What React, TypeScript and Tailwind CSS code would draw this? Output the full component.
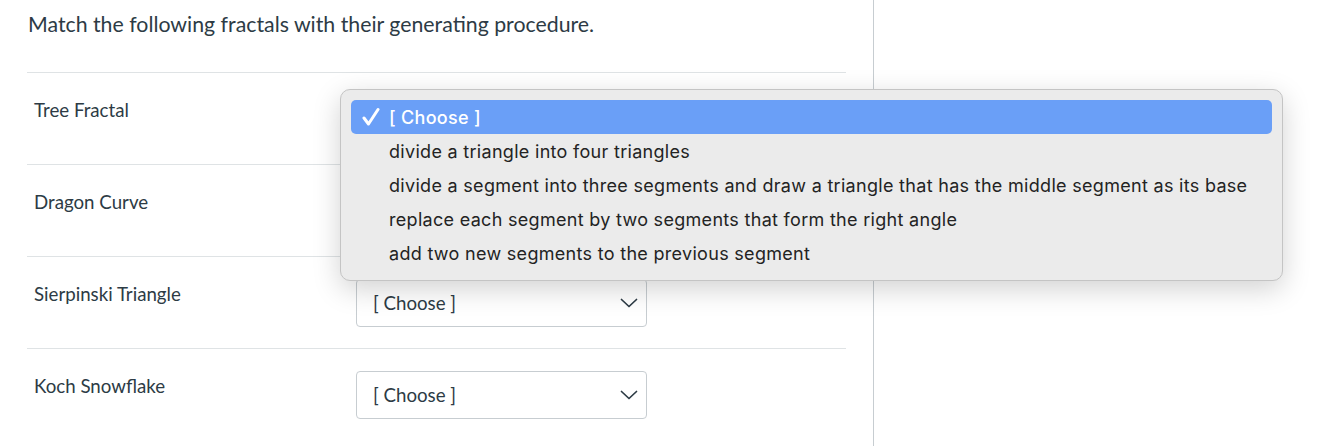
import React from "react";

const rows = ["Tree Fractal", "Dragon Curve", "Sierpinski Triangle", "Koch Snowflake"];
const options = [
  "[ Choose ]",
  "divide a triangle into four triangles",
  "divide a segment into three segments and draw a triangle that has the middle segment as its base",
  "replace each segment by two segments that form the right angle",
  "add two new segments to the previous segment",
];

function Select() {
  return (
    <div className="flex h-[48px] w-[291px] items-center justify-between rounded-[4px] border border-[#c7cdd1] bg-white pl-[16px] pr-[8px]">
      <span className="text-[18.7px] text-[#2d3b45]">[ Choose ]</span>
      <svg width="18" height="10" viewBox="0 0 18 10">
        <path d="M1.5 1.5 L9 8.5 L16.5 1.5" fill="none" stroke="#2d3b45" strokeWidth="1.7" strokeLinecap="round" strokeLinejoin="round" />
      </svg>
    </div>
  );
}

export default function App() {
  return (
    <div className="relative h-[446px] w-[1326px] overflow-hidden bg-white" style={{ fontFamily: "Lato, 'Noto Sans', sans-serif" }}>
      <div className="flex h-full">
        <div className="w-[874px] border-r border-[#c7cdd1] pl-[27px] pr-[27px]">
          <p className="pt-[10px] pl-[1px] text-[21.3px] leading-[28px] text-[#2d3b45]">
            Match the following fractals with their generating procedure.
          </p>
          <div className="mt-[34px]">
            {rows.map((r) => (
              <div key={r} className="flex h-[92px] border-t border-[#dfe3e5]">
                <div className="w-[329px] pl-[7px] pt-[24px] text-[18.7px] leading-[26px] text-[#2d3b45]">{r}</div>
                <div className="flex items-center pt-[1px]">
                  <Select />
                </div>
              </div>
            ))}
          </div>
        </div>
      </div>
      <div
        className="absolute left-[340px] top-[89px] w-[943px] rounded-[10px] border border-[#c4c4c4] bg-[#ebebeb] px-[10px] pt-[10px] pb-[10px] shadow-[0_8px_28px_rgba(0,0,0,0.18)]"
        style={{ fontFamily: "Inter, 'Noto Sans', sans-serif" }}
      >
        {options.map((o, i) => (
          <div
            key={o}
            className={
              i === 0
                ? "flex h-[34px] items-center rounded-[5px] bg-[#6a9ff7] text-white"
                : "flex h-[34px] items-center text-[#232323]"
            }
          >
            <div className="flex w-[38px] justify-center pl-[2px]">
              {i === 0 && (
                <svg width="18" height="20" viewBox="0 0 18 20">
                  <path d="M2 11 L6.5 17 L16 2.5" fill="none" stroke="white" strokeWidth="3" strokeLinecap="round" strokeLinejoin="round" />
                </svg>
              )}
            </div>
            <span className={i === 0 ? "text-[18px] font-medium tracking-[0.3px]" : "text-[18px] tracking-[0.3px]"}>{o}</span>
          </div>
        ))}
      </div>
    </div>
  );
}
